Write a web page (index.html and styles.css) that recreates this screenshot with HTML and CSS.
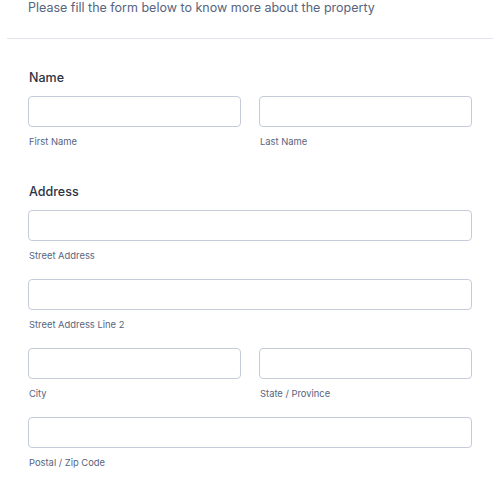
FILE: index.html
```html
<!DOCTYPE html>
<html lang="en">
<head>
    <meta charset="UTF-8">
    <meta name="viewport" content="width=device-width, initial-scale=1.0">
    <title>Property Inquiry</title>
    <link rel="stylesheet" href="styles.css">
</head>
<body>
    <div class="form-header">
        <p class="form-subtitle">Please fill the form below to know more about the property</p>
    </div>

    <form class="form-body">
        <!-- Name -->
        <div class="form-section">
            <label class="section-label">Name</label>
            <div class="field-row">
                <div class="field">
                    <input type="text" id="firstName">
                    <span class="sublabel">First Name</span>
                </div>
                <div class="field">
                    <input type="text" id="lastName">
                    <span class="sublabel">Last Name</span>
                </div>
            </div>
        </div>

        <!-- Address -->
        <div class="form-section address">
            <label class="section-label">Address</label>
            <div class="field-row">
                <div class="field">
                    <input type="text" id="street1">
                    <span class="sublabel">Street Address</span>
                </div>
            </div>
            <div class="field-row">
                <div class="field">
                    <input type="text" id="street2">
                    <span class="sublabel">Street Address Line 2</span>
                </div>
            </div>
            <div class="field-row">
                <div class="field">
                    <input type="text" id="city">
                    <span class="sublabel">City</span>
                </div>
                <div class="field">
                    <input type="text" id="state">
                    <span class="sublabel">State / Province</span>
                </div>
            </div>
            <div class="field-row">
                <div class="field">
                    <input type="text" id="zip">
                    <span class="sublabel">Postal / Zip Code</span>
                </div>
            </div>
        </div>
    </form>
</body>
</html>
```

FILE: styles.css
```css
:root {
    --heading-color: #2c3345;
    --text-muted: #57647e;
    --input-border: #c5cbd8;
    --divider: #e3e5ec;
}

body {
    font-family: 'Inter', 'Noto Sans', sans-serif;
    margin: 0;
    background: white;
}

.form-header {
    margin: 0 7px;
    padding: 0 21px 22px;
    border-bottom: 1px solid var(--divider);
}

.form-subtitle {
    margin: 0;
    font-size: 12.5px;
    line-height: 16px;
    color: var(--text-muted);
}

.form-body {
    padding: 28px 28px 0;
}

.form-section.address {
    margin-top: 33px;
}

.section-label {
    display: block;
    font-size: 12.5px;
    font-weight: 500;
    line-height: 20px;
    color: var(--heading-color);
    margin: 1px 0 8px 1px;
}

.field-row {
    display: flex;
    gap: 18px;
}

.field-row + .field-row {
    margin-top: 16px;
}

.field {
    flex: 1;
    min-width: 0;
    display: flex;
    flex-direction: column;
}

.field input {
    width: 100%;
    min-width: 0;
    height: 31px;
    box-sizing: border-box;
    border: 1px solid var(--input-border);
    border-radius: 4px;
    padding: 0 10px;
    font-size: 12.5px;
    font-family: inherit;
    background: white;
}

.sublabel {
    margin: 8px 0 0 1px;
    font-size: 9.4px;
    line-height: 14px;
    color: var(--text-muted);
}
```
